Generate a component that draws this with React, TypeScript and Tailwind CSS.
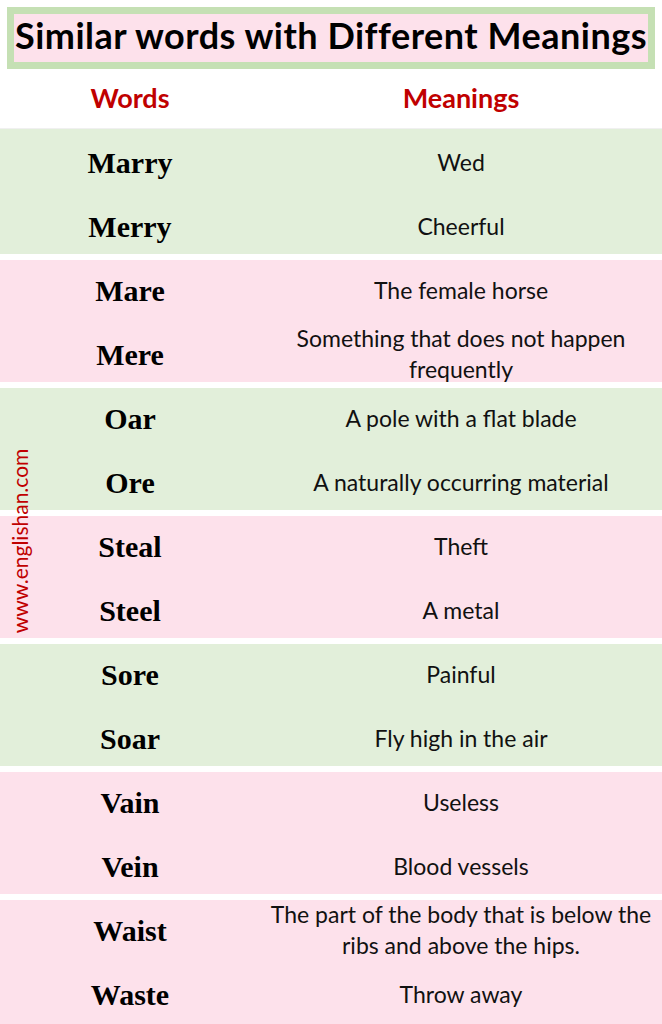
const groups = [
  {
    tone: "bg-[#e2efda]",
    rows: [
      { word: "Marry", meaning: "Wed" },
      { word: "Merry", meaning: "Cheerful" },
    ],
  },
  {
    tone: "bg-[#fde1eb]",
    rows: [
      { word: "Mare", meaning: "The female horse" },
      { word: "Mere", meaning: "Something that does not happen frequently" },
    ],
  },
  {
    tone: "bg-[#e2efda]",
    rows: [
      { word: "Oar", meaning: "A pole with a flat blade" },
      { word: "Ore", meaning: "A naturally occurring material" },
    ],
  },
  {
    tone: "bg-[#fde1eb]",
    rows: [
      { word: "Steal", meaning: "Theft" },
      { word: "Steel", meaning: "A metal" },
    ],
  },
  {
    tone: "bg-[#e2efda]",
    rows: [
      { word: "Sore", meaning: "Painful" },
      { word: "Soar", meaning: "Fly high in the air" },
    ],
  },
  {
    tone: "bg-[#fde1eb]",
    rows: [
      { word: "Vain", meaning: "Useless" },
      { word: "Vein", meaning: "Blood vessels" },
    ],
  },
  {
    tone: "bg-[#fde1eb]",
    rows: [
      {
        word: "Waist",
        meaning: "The part of the body that is below the ribs and above the hips.",
      },
      { word: "Waste", meaning: "Throw away" },
    ],
  },
];

const calibri = "font-['Lato',sans-serif]";

export default function App() {
  return (
    <div className="relative h-[1024px] w-[662px] overflow-hidden bg-white">
      <div className="px-[7px] pt-[7px]">
        <div className="border-[7px] border-[#c5e0b4] bg-[#fde1eb]">
          <h1
            className={`flex h-[48px] items-center justify-center pb-[6px] text-[36px] leading-none font-bold tracking-[0.5px] whitespace-nowrap text-black ${calibri}`}
          >
            Similar words with Different Meanings
          </h1>
        </div>
      </div>

      <div
        className={`grid h-[60px] grid-cols-[260px_1fr] items-center border-b border-[#f0f0f0] text-[27px] font-bold text-[#c00000] ${calibri}`}
      >
        <div className="text-center">Words</div>
        <div className="text-center">Meanings</div>
      </div>

      <div className="flex flex-col gap-[6px]">
        {groups.map((group, i) => (
          <div
            key={i}
            className={`${group.tone} ${
              i === 0
                ? "h-[125px] pt-[1px]"
                : i === groups.length - 1
                  ? "h-[126px]"
                  : "h-[122px]"
            }`}
          >
            <div className={i === 0 ? "" : "-mt-[2px]"}>
              {group.rows.map((row) => (
                <div
                  key={row.word}
                  className="grid h-16 grid-cols-[260px_1fr] items-center"
                >
                  <div className="text-center font-['Liberation_Serif',serif] text-[30px] font-bold text-black">
                    {row.word}
                  </div>
                  <div
                    className={`px-2 text-center text-[23px] leading-[31px] text-[#111] ${calibri}`}
                  >
                    {row.meaning}
                  </div>
                </div>
              ))}
            </div>
          </div>
        ))}
      </div>

      <div
        className={`absolute left-[20px] top-[541px] -translate-x-1/2 -translate-y-1/2 -rotate-90 whitespace-nowrap text-[21px] text-[#c00000] ${calibri}`}
      >
        www.englishan.com
      </div>
    </div>
  );
}
